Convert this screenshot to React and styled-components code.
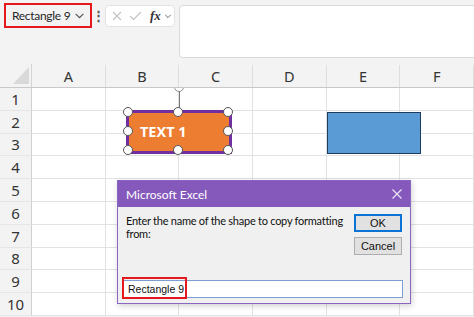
import React from 'react'
import styled, { createGlobalStyle } from 'styled-components'

const GlobalStyle = createGlobalStyle`
  html, body {
    margin: 0;
    padding: 0;
    background: #f3f3f3;
    overflow: hidden;
  }
  body {
    font-family: "Noto Sans", "Open Sans", sans-serif;
    color: #222;
  }
`

const COLUMNS = ['A', 'B', 'C', 'D', 'E', 'F']
const ROWS = [1, 2, 3, 4, 5, 6, 7, 8, 9, 10]

export default function App() {
  return (
    <Page>
      <GlobalStyle />
      <Toolbar>
        <NameBox>
          <span>Rectangle 9</span>
          <Chevron size={11} />
        </NameBox>
        <Dots>⋮</Dots>
        <FxGroup>
          <svg width="10" height="10" viewBox="0 0 10 10">
            <path d="M1 1 L9 9 M9 1 L1 9" stroke="#c2c2c2" strokeWidth="1.1" fill="none" />
          </svg>
          <svg width="13" height="10" viewBox="0 0 13 10">
            <path d="M1 5 L4.5 8.5 L12 1" stroke="#c2c2c2" strokeWidth="1.1" fill="none" />
          </svg>
          <FxLabel>fx</FxLabel>
          <Chevron size={8} />
        </FxGroup>
        <FormulaBox />
      </Toolbar>

      <Sheet>
        <HeaderRow>
          <Corner>
            <svg width="16" height="17" viewBox="0 0 16 17">
              <path d="M16 0 L16 17 L0 17 Z" fill="#d9d9d9" />
            </svg>
          </Corner>
          {COLUMNS.map((c) => (
            <ColHead key={c}>{c}</ColHead>
          ))}
        </HeaderRow>
        {ROWS.map((r) => (
          <Row key={r}>
            <RowHead>{r}</RowHead>
            {COLUMNS.map((c) => (
              <Cell key={c} />
            ))}
          </Row>
        ))}

        <RotateStem />
        <RotateKnob />
        <OrangeShape>
          TEXT 1
          <Handle $x="0%" $y="0%" />
          <Handle $x="50%" $y="0%" />
          <Handle $x="100%" $y="0%" />
          <Handle $x="0%" $y="50%" />
          <Handle $x="100%" $y="50%" />
          <Handle $x="0%" $y="100%" />
          <Handle $x="50%" $y="100%" />
          <Handle $x="100%" $y="100%" />
        </OrangeShape>
        <BlueShape />

        <Dialog>
          <TitleBar>
            <span>Microsoft Excel</span>
            <svg width="10" height="10" viewBox="0 0 10 10">
              <path d="M0.5 0.5 L9.5 9.5 M9.5 0.5 L0.5 9.5" stroke="#efe8f8" strokeWidth="1.1" fill="none" />
            </svg>
          </TitleBar>
          <DialogBody>
            <PromptRow>
              <Prompt>Enter the name of the shape to copy formatting from:</Prompt>
              <Buttons>
                <Button $primary>OK</Button>
                <Button>Cancel</Button>
              </Buttons>
            </PromptRow>
            <InputBox>
              <InputText>Rectangle 9</InputText>
            </InputBox>
          </DialogBody>
        </Dialog>
      </Sheet>
    </Page>
  )
}

function Chevron({ size }) {
  return (
    <svg width={size} height={size} viewBox="0 0 10 10">
      <path d="M1.5 3.5 L5 7 L8.5 3.5" stroke="#555" strokeWidth="1.1" fill="none" />
    </svg>
  )
}

const Page = styled.div`
  width: 474px;
  height: 317px;
  overflow: hidden;
  background: #f3f3f3;
`

const Toolbar = styled.div`
  height: 64px;
  display: flex;
  align-items: flex-start;
  padding: 3px 0 0 4px;
  box-sizing: border-box;
`

const NameBox = styled.div`
  width: 88px;
  height: 25px;
  box-sizing: border-box;
  border: 2px solid #e3191e;
  display: flex;
  align-items: center;
  justify-content: space-between;
  padding: 0 5px 0 6px;
  font-family: Lato, "Noto Sans", sans-serif;
  font-size: 12px;
  letter-spacing: -0.3px;
  color: #262626;
  white-space: nowrap;
`

const Dots = styled.div`
  width: 12px;
  text-align: center;
  font-size: 13px;
  line-height: 25px;
  color: #555;
  font-weight: bold;
`

const FxGroup = styled.div`
  margin-top: 2px;
  width: 70px;
  height: 22px;
  box-sizing: border-box;
  background: #fff;
  border: 1px solid #e3e3e3;
  border-radius: 4px;
  display: flex;
  align-items: center;
  gap: 7px;
  padding-left: 6px;
  margin-left: 1px;
`

const FxLabel = styled.span`
  font-family: "Liberation Serif", "DejaVu Serif", serif;
  font-style: italic;
  font-weight: bold;
  font-size: 13px;
  color: #333;
  margin-left: 1px;
  margin-right: -4px;
`

const FormulaBox = styled.div`
  flex: 1;
  margin-left: 4px;
  margin-top: 2px;
  margin-right: -6px;
  height: 53px;
  box-sizing: border-box;
  background: #fff;
  border: 1px solid #dadada;
  border-radius: 4px;
`

const Sheet = styled.div`
  position: relative;
`

const HeaderRow = styled.div`
  position: relative;
  z-index: 2;
  display: grid;
  grid-template-columns: 32px repeat(6, 1fr);
  height: 24px;
  background: #f3f3f3;
  border-bottom: 1px solid #c8c8c8;
  box-sizing: border-box;
`

const Corner = styled.div`
  display: flex;
  align-items: flex-end;
  justify-content: flex-end;
  padding: 0 2px 3px 0;
  border-right: 1px solid #d4d4d4;
`

const ColHead = styled.div`
  display: flex;
  align-items: center;
  justify-content: center;
  font-size: 14.5px;
  color: #333;
  border-right: 1px solid #dedede;
  margin-top: 1px;
`

const Row = styled.div`
  display: grid;
  grid-template-columns: 32px repeat(6, 1fr);
  height: 22.8px;
`

const RowHead = styled.div`
  display: flex;
  align-items: center;
  justify-content: center;
  background: #f3f3f3;
  font-size: 15px;
  color: #333;
  border-right: 1px solid #d0d0d0;
  border-bottom: 1px solid #e6e6e6;
`

const Cell = styled.div`
  background: #fff;
  border-right: 1px solid #e2e2e2;
  border-bottom: 1px solid #e2e2e2;
`

const RotateStem = styled.div`
  position: absolute;
  left: 178.5px;
  top: 24px;
  width: 1px;
  height: 22px;
  background: #777;
`

const RotateKnob = styled.div`
  position: absolute;
  left: 174px;
  top: 18px;
  width: 8px;
  height: 8px;
  border: 1.5px solid #8a8a8a;
  border-radius: 50%;
  background: #fff;
`

const OrangeShape = styled.div`
  position: absolute;
  left: 126px;
  top: 46px;
  width: 106px;
  height: 44px;
  box-sizing: border-box;
  border: 3.5px solid #7030a0;
  background: #ed7d31;
  color: #fff;
  font-weight: bold;
  font-size: 14.5px;
  display: flex;
  align-items: center;
  padding-left: 11px;
  padding-bottom: 3px;
`

const Handle = styled.div`
  position: absolute;
  left: ${(p) => p.$x};
  top: ${(p) => p.$y};
  width: 8px;
  height: 8px;
  margin: -6px 0 0 -6px;
  border: 1px solid #555;
  border-radius: 50%;
  background: #fff;
`

const BlueShape = styled.div`
  position: absolute;
  left: 327px;
  top: 48px;
  width: 94px;
  height: 42px;
  box-sizing: border-box;
  border: 1.5px solid #1f3b5e;
  background: #5b9bd5;
`

const Dialog = styled.div`
  position: absolute;
  z-index: 3;
  left: 117px;
  top: 116px;
  width: 294px;
  height: 124px;
  box-sizing: border-box;
  border: 1px solid #8a66c2;
  background: #f0f0f0;
  box-shadow: 1px 2px 6px rgba(0, 0, 0, 0.18);
  display: flex;
  flex-direction: column;
`

const TitleBar = styled.div`
  height: 26px;
  flex-shrink: 0;
  background: #8559bb;
  color: #fff;
  font-family: Lato, "Noto Sans", sans-serif;
  font-size: 12px;
  display: flex;
  align-items: center;
  justify-content: space-between;
  padding: 0 8px 0 8px;
`

const DialogBody = styled.div`
  flex: 1;
  display: flex;
  flex-direction: column;
  padding: 7px 8px 5px 5px;
`

const PromptRow = styled.div`
  display: flex;
  justify-content: space-between;
`

const Prompt = styled.div`
  width: 222px;
  margin: 0 0 0 3px;
  font-family: Lato, "Noto Sans", sans-serif;
  font-size: 11px;
  letter-spacing: -0.25px;
  line-height: 13px;
  color: #111;
`

const Buttons = styled.div`
  display: flex;
  flex-direction: column;
  gap: 5px;
`

const Button = styled.div`
  width: 48px;
  height: 18px;
  box-sizing: border-box;
  display: flex;
  align-items: center;
  justify-content: center;
  font-family: "Liberation Sans", Arial, sans-serif;
  font-size: 11px;
  color: #111;
  background: #e1e1e1;
  border: ${(p) => (p.$primary ? '2px solid #0a74d4' : '1px solid #adadad')};
`

const InputBox = styled.div`
  margin-top: auto;
  position: relative;
  height: 18px;
  box-sizing: border-box;
  margin-right: -1px;
  background: #fff;
  border: 1px solid #7a9fd0;
  display: flex;
  align-items: center;
  padding-left: 4px;
`

const InputText = styled.span`
  font-family: "Liberation Sans", Arial, sans-serif;
  font-size: 10.5px;
  color: #111;

  &::after {
    content: '';
    position: absolute;
    left: -2px;
    top: -4px;
    width: 65px;
    height: 22px;
    border: 2px solid #e3191e;
    box-sizing: border-box;
  }
`
